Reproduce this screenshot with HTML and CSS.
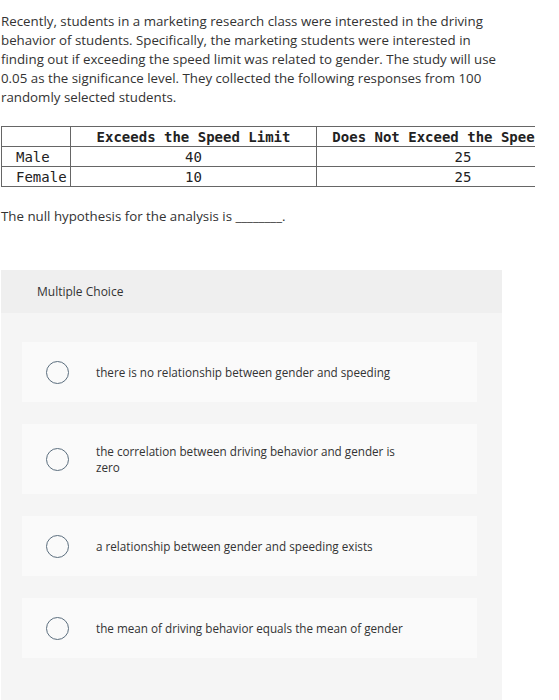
FILE: index.html
```html
<!DOCTYPE html>
<html>
<head>
<meta charset="utf-8">
<link rel="stylesheet" href="styles.css">
</head>
<body>
<div class="page">
  <p class="intro">Recently, students in a marketing research class were interested in the driving behavior of students. Specifically, the marketing students were interested in finding out if exceeding the speed limit was related to gender. The study will use 0.05 as the significance level. They collected the following responses from 100 randomly selected students.</p>
  <div class="table-wrap">
    <table class="data">
      <colgroup><col class="w1"><col class="w2"><col class="w3"></colgroup>
      <tr><th class="c1"></th><th class="c2">Exceeds the Speed Limit</th><th class="c3">Does Not Exceed the Speed Limit</th></tr>
      <tr><td class="c1">Male</td><td class="c2">40</td><td class="c3">25</td></tr>
      <tr><td class="c1">Female</td><td class="c2">10</td><td class="c3">25</td></tr>
    </table>
  </div>
  <p class="question">The null hypothesis for the analysis is ________.</p>
  <section class="mc">
    <div class="mc-head">Multiple Choice</div>
    <div class="mc-body">
      <div class="option"><span class="radio"></span><span class="opt-text">there is no relationship between gender and speeding</span></div>
      <div class="option"><span class="radio"></span><span class="opt-text">the correlation between driving behavior and gender is zero</span></div>
      <div class="option"><span class="radio"></span><span class="opt-text">a relationship between gender and speeding exists</span></div>
      <div class="option"><span class="radio"></span><span class="opt-text">the mean of driving behavior equals the mean of gender</span></div>
    </div>
  </section>
</div>
</body>
</html>
```
FILE: styles.css
```css
html, body {
  margin: 0;
  padding: 0;
  background: #fff;
  overflow: hidden;
}
.page {
  padding: 0 0 0 1px;
  font-family: "Open Sans", "Liberation Sans", sans-serif;
  color: #333;
}
.intro {
  margin: 0;
  padding-top: 12px;
  font-size: 13.3px;
  line-height: 19px;
  width: 502px;
  color: #333;
}
.table-wrap {
  margin-top: 19px;
  width: 534px;
  overflow: hidden;
}
.data {
  border-collapse: collapse;
  table-layout: fixed;
  width: 608px;
  font-family: "DejaVu Sans Mono", monospace;
  font-size: 14px;
  color: #222;
  white-space: nowrap;
}
.w1 { width: 69px; }
.w2 { width: 246px; }
.w3 { width: 293px; }
.data th, .data td {
  border: 1px solid #666;
  height: 19px;
  padding: 0;
  line-height: 18px;
}
.data th { font-weight: bold; }
.data .c1 { padding-left: 14px; text-align: left; }
.data .c2 { text-align: center; }
.data .c3 { text-align: center; }
.question {
  margin: 20px 0 0;
  font-size: 13.3px;
  line-height: 19px;
}
.mc {
  margin-top: 44px;
  width: 501px;
  background: #f5f5f5;
  min-height: 500px;
}
.mc-head {
  height: 43px;
  background: #efefef;
  font-size: 12px;
  line-height: 43px;
  padding-left: 36px;
  color: #333;
}
.mc-body {
  padding: 29px 25px 40px 21px;
  display: flex;
  flex-direction: column;
  gap: 22px;
}
.option {
  background: #fafafa;
  min-height: 60px;
  display: flex;
  align-items: center;
  padding: 12px 0 12px 24px;
  box-sizing: border-box;
}
.option:nth-child(2) { min-height: 70px; }
.radio {
  flex: none;
  width: 21px;
  height: 21px;
  border: 1.5px solid #5b6e7e;
  border-radius: 50%;
  margin-right: 27px;
}
.opt-text {
  font-size: 11.7px;
  line-height: 16px;
  color: #333;
  max-width: 310px;
}
```
